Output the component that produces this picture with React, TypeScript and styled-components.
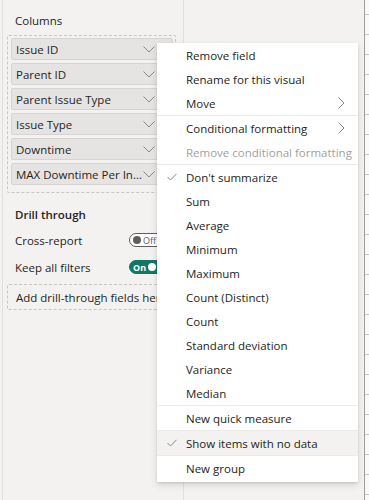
import React from "react";
import styled, { createGlobalStyle } from "styled-components";

const GlobalStyle = createGlobalStyle`
  html, body {
    margin: 0;
    padding: 0;
    background: #f3f2f1;
  }
  body {
    font-family: "Segoe UI", "Open Sans", "Noto Sans", sans-serif;
    font-size: 11.5px;
    color: #252423;
  }
`;

const Page = styled.div`
  position: relative;
  display: flex;
  width: 369px;
  height: 500px;
  overflow: hidden;
  background: #f3f2f1;
`;

const Pane = styled.div`
  display: flex;
  flex-direction: column;
  width: 169px;
  margin-left: 2px;
  padding: 12px 7px 0 4px;
  border-left: 1px solid #e1dfdd;
  border-right: 1px solid #e1dfdd;
  background: #f3f2f1;
`;

const Canvas = styled.div`
  flex: 1;
  background: #f3f2f1;
`;

const Ruler = styled.div`
  width: 4px;
  border-left: 1px solid #a19f9d;
  background-color: #faf9f8;
  background-image: repeating-linear-gradient(
    to bottom,
    transparent 0,
    transparent 14px,
    #c8c6c4 14px,
    #c8c6c4 15px,
    transparent 15px,
    transparent 20px
  );
`;

const Label = styled.div`
  padding-left: 8px;
  line-height: 18px;
`;

const Well = styled.div`
  margin-top: 5px;
  display: flex;
  flex-direction: column;
  gap: 3px;
  padding: 2px 2px 7px 3px;
  border: 1px dashed #c8c6c4;
  border-radius: 2px;
`;

const Pill = styled.div`
  display: flex;
  align-items: center;
  justify-content: space-between;
  height: 20px;
  padding: 0 17px 0 4px;
  background: #e6e4e2;
  border: 1px solid #d6d4d2;
  border-radius: 2px;
  white-space: nowrap;
`;

const PillText = styled.span`
  overflow: hidden;
  text-overflow: ellipsis;
`;

const Heading = styled.div`
  margin-top: 13px;
  padding-left: 8px;
  line-height: 18px;
  font-weight: 600;
`;

const ToggleRow = styled.div<{ $gap: number }>`
  display: flex;
  align-items: center;
  justify-content: space-between;
  height: 24px;
  margin-top: ${(p) => p.$gap}px;
  padding-left: 8px;
  white-space: nowrap;
`;

const Toggle = styled.div<{ $on?: boolean }>`
  display: flex;
  align-items: center;
  gap: 2px;
  width: 40px;
  height: 14px;
  margin-right: 7px;
  padding: 0 3px;
  box-sizing: border-box;
  border-radius: 8px;
  border: 1px solid ${(p) => (p.$on ? "#117865" : "#605e5c")};
  background: ${(p) => (p.$on ? "#117865" : "#ffffff")};
  color: ${(p) => (p.$on ? "#ffffff" : "#605e5c")};
  font-size: 9px;
  font-weight: ${(p) => (p.$on ? 700 : 400)};
`;

const Knob = styled.span<{ $on?: boolean }>`
  width: 8px;
  height: 8px;
  border-radius: 50%;
  background: ${(p) => (p.$on ? "#ffffff" : "#605e5c")};
`;

const DropBox = styled.div`
  margin-top: 5px;
  height: 24px;
  display: flex;
  align-items: center;
  padding-left: 8px;
  border: 1px dashed #c8c6c4;
  border-radius: 2px;
  white-space: nowrap;
  overflow: hidden;
`;

const Menu = styled.div`
  position: absolute;
  left: 157px;
  top: 43px;
  width: 201px;
  padding-bottom: 2px;
  background: #ffffff;
  box-shadow: 0 3.2px 7.2px rgba(0, 0, 0, 0.13), 0 0.6px 1.8px rgba(0, 0, 0, 0.11);
`;

const Item = styled.div<{ $disabled?: boolean; $active?: boolean }>`
  position: relative;
  display: flex;
  align-items: center;
  height: 24px;
  padding-left: 29px;
  color: ${(p) => (p.$disabled ? "#a19f9d" : "#252423")};
  background: ${(p) => (p.$active ? "#f3f2f1" : "transparent")};
  white-space: nowrap;
`;

const Separator = styled.div`
  height: 1px;
  background: #edebe9;
`;

const CheckMark = styled.svg`
  position: absolute;
  left: 10px;
  top: 8px;
`;

const Chevron = styled.svg`
  position: absolute;
  right: 13px;
  top: 6px;
`;

const DownIcon = () => (
  <svg width="12" height="7" viewBox="0 0 12 7">
    <path d="M0.5 0.5 L6 6 L11.5 0.5" fill="none" stroke="#8a8886" strokeWidth="1" />
  </svg>
);

const Check = () => (
  <CheckMark width="10" height="8" viewBox="0 0 10 8">
    <path d="M0.5 4 L3.5 7 L9.5 0.8" fill="none" stroke="#8a8886" strokeWidth="1" />
  </CheckMark>
);

const Right = () => (
  <Chevron width="7" height="12" viewBox="0 0 7 12">
    <path d="M0.5 0.5 L6 6 L0.5 11.5" fill="none" stroke="#8a8886" strokeWidth="1" />
  </Chevron>
);

const fields = ["Issue ID", "Parent ID", "Parent Issue Type", "Issue Type", "Downtime", "MAX Downtime Per In..."];

type Entry = { label: string; check?: boolean; sub?: boolean; disabled?: boolean; active?: boolean } | "sep";

const entries: Entry[] = [
  { label: "Remove field" },
  { label: "Rename for this visual" },
  { label: "Move", sub: true },
  "sep",
  { label: "Conditional formatting", sub: true },
  { label: "Remove conditional formatting", disabled: true },
  "sep",
  { label: "Don't summarize", check: true },
  { label: "Sum" },
  { label: "Average" },
  { label: "Minimum" },
  { label: "Maximum" },
  { label: "Count (Distinct)" },
  { label: "Count" },
  { label: "Standard deviation" },
  { label: "Variance" },
  { label: "Median" },
  "sep",
  { label: "New quick measure" },
  "sep",
  { label: "Show items with no data", check: true, active: true },
  "sep",
  { label: "New group" },
];

export default function App() {
  return (
    <>
      <GlobalStyle />
      <Page>
        <Pane>
          <Label>Columns</Label>
          <Well>
            {fields.map((f) => (
              <Pill key={f}>
                <PillText>{f}</PillText>
                <DownIcon />
              </Pill>
            ))}
          </Well>
          <Heading>Drill through</Heading>
          <ToggleRow $gap={4}>
            Cross-report
            <Toggle>
              <Knob />
              Off
            </Toggle>
          </ToggleRow>
          <ToggleRow $gap={3}>
            Keep all filters
            <Toggle $on>
              On
              <Knob $on />
            </Toggle>
          </ToggleRow>
          <DropBox>Add drill-through fields here</DropBox>
        </Pane>
        <Canvas />
        <Ruler />
        <Menu>
          {entries.map((e, i) =>
            e === "sep" ? (
              <Separator key={i} />
            ) : (
              <Item key={i} $disabled={e.disabled} $active={e.active}>
                {e.check && <Check />}
                {e.label}
                {e.sub && <Right />}
              </Item>
            )
          )}
        </Menu>
      </Page>
    </>
  );
}
